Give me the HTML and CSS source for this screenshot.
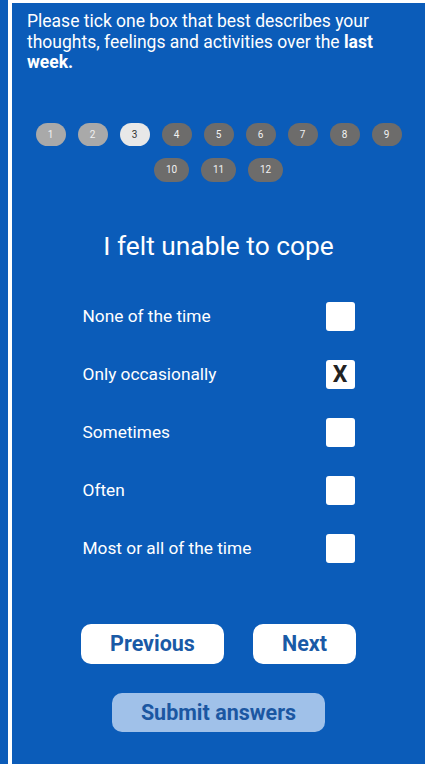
FILE: index.html
```html
<!DOCTYPE html>
<html>
<head>
<meta charset="utf-8">
<link rel="stylesheet" href="styles.css">
</head>
<body>
<div class="frame">
  <div class="edge"></div>
  <main class="panel">
    <p class="intro">Please tick one box that best describes your thoughts, feelings and activities over the <b>last week.</b></p>
    <nav class="steps">
      <div class="step-row">
        <span class="step done">1</span>
        <span class="step done">2</span>
        <span class="step current">3</span>
        <span class="step">4</span>
        <span class="step">5</span>
        <span class="step">6</span>
        <span class="step">7</span>
        <span class="step">8</span>
        <span class="step">9</span>
      </div>
      <div class="step-row">
        <span class="step wide">10</span>
        <span class="step wide">11</span>
        <span class="step wide">12</span>
      </div>
    </nav>
    <h1 class="question">I felt unable to cope</h1>
    <ul class="options">
      <li class="option"><span class="label">None of the time</span><span class="box"></span></li>
      <li class="option"><span class="label">Only occasionally</span><span class="box checked">X</span></li>
      <li class="option"><span class="label">Sometimes</span><span class="box"></span></li>
      <li class="option"><span class="label">Often</span><span class="box"></span></li>
      <li class="option"><span class="label">Most or all of the time</span><span class="box"></span></li>
    </ul>
    <div class="nav-buttons">
      <button class="btn prev">Previous</button>
      <button class="btn next">Next</button>
    </div>
    <div class="submit-wrap">
      <button class="btn submit">Submit answers</button>
    </div>
  </main>
</div>
</body>
</html>
```
FILE: styles.css
```css
html, body {
  margin: 0;
  padding: 0;
  background: #ffffff;
  font-family: Roboto, "Noto Sans", sans-serif;
}
.frame {
  display: flex;
  height: 764px;
  overflow: hidden;
}
.edge {
  width: 8px;
  flex: none;
  background: #0b5cb9;
  margin-right: 4px;
}
.panel {
  flex: 1;
  margin: 3px 5px 0 0;
  background: #0b5cb9;
  color: #ffffff;
  display: flex;
  flex-direction: column;
  align-items: center;
}
.intro {
  align-self: stretch;
  margin: 0;
  padding: 8px 12px 0 15px;
  font-size: 17.5px;
  line-height: 20.5px;
}
.intro b { font-weight: 700; }
.steps {
  margin-top: 50px;
  display: flex;
  flex-direction: column;
  align-items: center;
  gap: 12px;
}
.step-row {
  display: flex;
  gap: 12px;
}
.step {
  width: 30px;
  height: 23px;
  border-radius: 12px;
  background: #6d6c6b;
  color: #f2f2f2;
  font-size: 10px;
  display: flex;
  align-items: center;
  justify-content: center;
}
.step.wide { width: 35px; height: 24px; }
.step.done { background: #a9a9a9; }
.step.current { background: #e8e8e8; color: #333333; }
.question {
  margin: 49px 0 0 0;
  font-size: 26.3px;
  font-weight: 400;
  line-height: 30px;
}
.options {
  list-style: none;
  margin: 41px 0 0 0;
  padding: 0;
  width: 272px;
  display: flex;
  flex-direction: column;
  gap: 29px;
}
.option {
  display: flex;
  align-items: center;
  justify-content: space-between;
  height: 29px;
}
.label {
  font-size: 17.3px;
}
.box {
  width: 29px;
  height: 29px;
  border-radius: 3px;
  background: #ffffff;
  color: #222222;
  font-size: 23px;
  font-weight: 700;
  display: flex;
  align-items: center;
  justify-content: center;
}
.nav-buttons {
  margin-top: 61px;
  display: flex;
  gap: 29px;
}
.btn {
  border: none;
  border-radius: 10px;
  height: 40px;
  font-family: Roboto, "Noto Sans", sans-serif;
  font-size: 21.5px;
  font-weight: 700;
  color: #1a5aa6;
  background: #ffffff;
  padding: 0;
}
.prev { width: 143px; }
.next { width: 103px; }
.submit-wrap { margin-top: 29px; }
.submit {
  width: 213px;
  height: 39px;
  background: #a0c1e9;
  color: #1b57a2;
}
```
